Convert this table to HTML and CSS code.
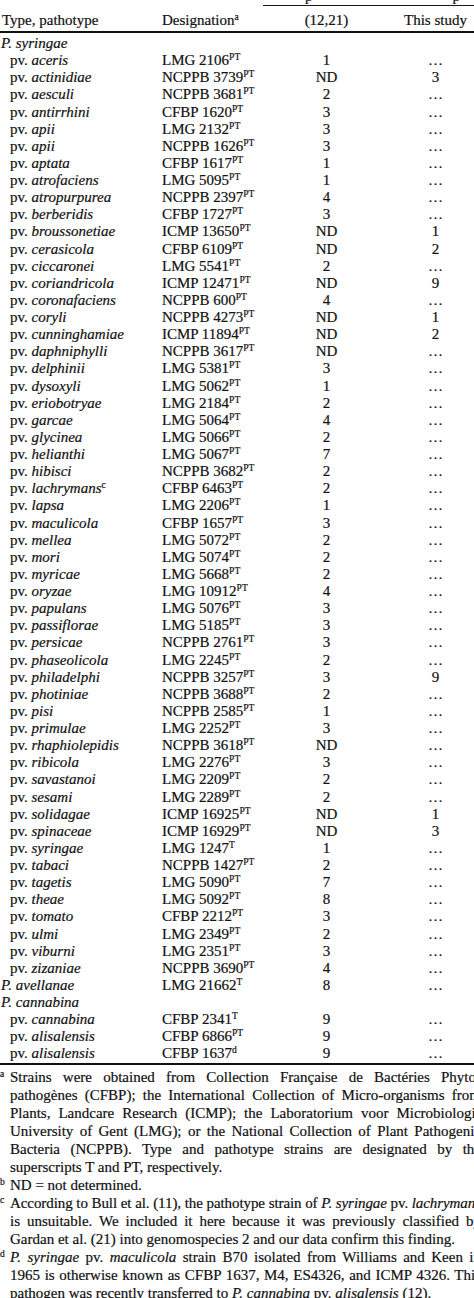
FILE: index.html
```html
<!DOCTYPE html>
<html>
<head>
<meta charset="utf-8">
<link rel="stylesheet" href="styles.css">
</head>
<body>
<div class="page">
  <div class="topcut"><div class="topcut-inner"><span class="gap1"></span>p<span class="gap2"></span>p</div></div>
  <div class="toprule"></div>
  <div class="row head">
    <div class="c1">Type, pathotype</div>
    <div class="c2">Designation<sup>a</sup></div>
    <div class="c3">(12,21)</div>
    <div class="c4">This study</div>
  </div>
  <div class="tbody">
    <div class="row"><div class="c1 sp"><i>P. syringae</i></div><div class="c2"></div><div class="c3"></div><div class="c4"></div></div>
    <div class="row"><div class="c1 pv">pv. <i>aceris</i></div><div class="c2">LMG 2106<sup>PT</sup></div><div class="c3">1</div><div class="c4">…</div></div>
    <div class="row"><div class="c1 pv">pv. <i>actinidiae</i></div><div class="c2">NCPPB 3739<sup>PT</sup></div><div class="c3">ND</div><div class="c4">3</div></div>
    <div class="row"><div class="c1 pv">pv. <i>aesculi</i></div><div class="c2">NCPPB 3681<sup>PT</sup></div><div class="c3">2</div><div class="c4">…</div></div>
    <div class="row"><div class="c1 pv">pv. <i>antirrhini</i></div><div class="c2">CFBP 1620<sup>PT</sup></div><div class="c3">3</div><div class="c4">…</div></div>
    <div class="row"><div class="c1 pv">pv. <i>apii</i></div><div class="c2">LMG 2132<sup>PT</sup></div><div class="c3">3</div><div class="c4">…</div></div>
    <div class="row"><div class="c1 pv">pv. <i>apii</i></div><div class="c2">NCPPB 1626<sup>PT</sup></div><div class="c3">3</div><div class="c4">…</div></div>
    <div class="row"><div class="c1 pv">pv. <i>aptata</i></div><div class="c2">CFBP 1617<sup>PT</sup></div><div class="c3">1</div><div class="c4">…</div></div>
    <div class="row"><div class="c1 pv">pv. <i>atrofaciens</i></div><div class="c2">LMG 5095<sup>PT</sup></div><div class="c3">1</div><div class="c4">…</div></div>
    <div class="row"><div class="c1 pv">pv. <i>atropurpurea</i></div><div class="c2">NCPPB 2397<sup>PT</sup></div><div class="c3">4</div><div class="c4">…</div></div>
    <div class="row"><div class="c1 pv">pv. <i>berberidis</i></div><div class="c2">CFBP 1727<sup>PT</sup></div><div class="c3">3</div><div class="c4">…</div></div>
    <div class="row"><div class="c1 pv">pv. <i>broussonetiae</i></div><div class="c2">ICMP 13650<sup>PT</sup></div><div class="c3">ND</div><div class="c4">1</div></div>
    <div class="row"><div class="c1 pv">pv. <i>cerasicola</i></div><div class="c2">CFBP 6109<sup>PT</sup></div><div class="c3">ND</div><div class="c4">2</div></div>
    <div class="row"><div class="c1 pv">pv. <i>ciccaronei</i></div><div class="c2">LMG 5541<sup>PT</sup></div><div class="c3">2</div><div class="c4">…</div></div>
    <div class="row"><div class="c1 pv">pv. <i>coriandricola</i></div><div class="c2">ICMP 12471<sup>PT</sup></div><div class="c3">ND</div><div class="c4">9</div></div>
    <div class="row"><div class="c1 pv">pv. <i>coronafaciens</i></div><div class="c2">NCPPB 600<sup>PT</sup></div><div class="c3">4</div><div class="c4">…</div></div>
    <div class="row"><div class="c1 pv">pv. <i>coryli</i></div><div class="c2">NCPPB 4273<sup>PT</sup></div><div class="c3">ND</div><div class="c4">1</div></div>
    <div class="row"><div class="c1 pv">pv. <i>cunninghamiae</i></div><div class="c2">ICMP 11894<sup>PT</sup></div><div class="c3">ND</div><div class="c4">2</div></div>
    <div class="row"><div class="c1 pv">pv. <i>daphniphylli</i></div><div class="c2">NCPPB 3617<sup>PT</sup></div><div class="c3">ND</div><div class="c4">…</div></div>
    <div class="row"><div class="c1 pv">pv. <i>delphinii</i></div><div class="c2">LMG 5381<sup>PT</sup></div><div class="c3">3</div><div class="c4">…</div></div>
    <div class="row"><div class="c1 pv">pv. <i>dysoxyli</i></div><div class="c2">LMG 5062<sup>PT</sup></div><div class="c3">1</div><div class="c4">…</div></div>
    <div class="row"><div class="c1 pv">pv. <i>eriobotryae</i></div><div class="c2">LMG 2184<sup>PT</sup></div><div class="c3">2</div><div class="c4">…</div></div>
    <div class="row"><div class="c1 pv">pv. <i>garcae</i></div><div class="c2">LMG 5064<sup>PT</sup></div><div class="c3">4</div><div class="c4">…</div></div>
    <div class="row"><div class="c1 pv">pv. <i>glycinea</i></div><div class="c2">LMG 5066<sup>PT</sup></div><div class="c3">2</div><div class="c4">…</div></div>
    <div class="row"><div class="c1 pv">pv. <i>helianthi</i></div><div class="c2">LMG 5067<sup>PT</sup></div><div class="c3">7</div><div class="c4">…</div></div>
    <div class="row"><div class="c1 pv">pv. <i>hibisci</i></div><div class="c2">NCPPB 3682<sup>PT</sup></div><div class="c3">2</div><div class="c4">…</div></div>
    <div class="row"><div class="c1 pv">pv. <i>lachrymans</i><sup>c</sup></div><div class="c2">CFBP 6463<sup>PT</sup></div><div class="c3">2</div><div class="c4">…</div></div>
    <div class="row"><div class="c1 pv">pv. <i>lapsa</i></div><div class="c2">LMG 2206<sup>PT</sup></div><div class="c3">1</div><div class="c4">…</div></div>
    <div class="row"><div class="c1 pv">pv. <i>maculicola</i></div><div class="c2">CFBP 1657<sup>PT</sup></div><div class="c3">3</div><div class="c4">…</div></div>
    <div class="row"><div class="c1 pv">pv. <i>mellea</i></div><div class="c2">LMG 5072<sup>PT</sup></div><div class="c3">2</div><div class="c4">…</div></div>
    <div class="row"><div class="c1 pv">pv. <i>mori</i></div><div class="c2">LMG 5074<sup>PT</sup></div><div class="c3">2</div><div class="c4">…</div></div>
    <div class="row"><div class="c1 pv">pv. <i>myricae</i></div><div class="c2">LMG 5668<sup>PT</sup></div><div class="c3">2</div><div class="c4">…</div></div>
    <div class="row"><div class="c1 pv">pv. <i>oryzae</i></div><div class="c2">LMG 10912<sup>PT</sup></div><div class="c3">4</div><div class="c4">…</div></div>
    <div class="row"><div class="c1 pv">pv. <i>papulans</i></div><div class="c2">LMG 5076<sup>PT</sup></div><div class="c3">3</div><div class="c4">…</div></div>
    <div class="row"><div class="c1 pv">pv. <i>passiflorae</i></div><div class="c2">LMG 5185<sup>PT</sup></div><div class="c3">3</div><div class="c4">…</div></div>
    <div class="row"><div class="c1 pv">pv. <i>persicae</i></div><div class="c2">NCPPB 2761<sup>PT</sup></div><div class="c3">3</div><div class="c4">…</div></div>
    <div class="row"><div class="c1 pv">pv. <i>phaseolicola</i></div><div class="c2">LMG 2245<sup>PT</sup></div><div class="c3">2</div><div class="c4">…</div></div>
    <div class="row"><div class="c1 pv">pv. <i>philadelphi</i></div><div class="c2">NCPPB 3257<sup>PT</sup></div><div class="c3">3</div><div class="c4">9</div></div>
    <div class="row"><div class="c1 pv">pv. <i>photiniae</i></div><div class="c2">NCPPB 3688<sup>PT</sup></div><div class="c3">2</div><div class="c4">…</div></div>
    <div class="row"><div class="c1 pv">pv. <i>pisi</i></div><div class="c2">NCPPB 2585<sup>PT</sup></div><div class="c3">1</div><div class="c4">…</div></div>
    <div class="row"><div class="c1 pv">pv. <i>primulae</i></div><div class="c2">LMG 2252<sup>PT</sup></div><div class="c3">3</div><div class="c4">…</div></div>
    <div class="row"><div class="c1 pv">pv. <i>rhaphiolepidis</i></div><div class="c2">NCPPB 3618<sup>PT</sup></div><div class="c3">ND</div><div class="c4">…</div></div>
    <div class="row"><div class="c1 pv">pv. <i>ribicola</i></div><div class="c2">LMG 2276<sup>PT</sup></div><div class="c3">3</div><div class="c4">…</div></div>
    <div class="row"><div class="c1 pv">pv. <i>savastanoi</i></div><div class="c2">LMG 2209<sup>PT</sup></div><div class="c3">2</div><div class="c4">…</div></div>
    <div class="row"><div class="c1 pv">pv. <i>sesami</i></div><div class="c2">LMG 2289<sup>PT</sup></div><div class="c3">2</div><div class="c4">…</div></div>
    <div class="row"><div class="c1 pv">pv. <i>solidagae</i></div><div class="c2">ICMP 16925<sup>PT</sup></div><div class="c3">ND</div><div class="c4">1</div></div>
    <div class="row"><div class="c1 pv">pv. <i>spinaceae</i></div><div class="c2">ICMP 16929<sup>PT</sup></div><div class="c3">ND</div><div class="c4">3</div></div>
    <div class="row"><div class="c1 pv">pv. <i>syringae</i></div><div class="c2">LMG 1247<sup>T</sup></div><div class="c3">1</div><div class="c4">…</div></div>
    <div class="row"><div class="c1 pv">pv. <i>tabaci</i></div><div class="c2">NCPPB 1427<sup>PT</sup></div><div class="c3">2</div><div class="c4">…</div></div>
    <div class="row"><div class="c1 pv">pv. <i>tagetis</i></div><div class="c2">LMG 5090<sup>PT</sup></div><div class="c3">7</div><div class="c4">…</div></div>
    <div class="row"><div class="c1 pv">pv. <i>theae</i></div><div class="c2">LMG 5092<sup>PT</sup></div><div class="c3">8</div><div class="c4">…</div></div>
    <div class="row"><div class="c1 pv">pv. <i>tomato</i></div><div class="c2">CFBP 2212<sup>PT</sup></div><div class="c3">3</div><div class="c4">…</div></div>
    <div class="row"><div class="c1 pv">pv. <i>ulmi</i></div><div class="c2">LMG 2349<sup>PT</sup></div><div class="c3">2</div><div class="c4">…</div></div>
    <div class="row"><div class="c1 pv">pv. <i>viburni</i></div><div class="c2">LMG 2351<sup>PT</sup></div><div class="c3">3</div><div class="c4">…</div></div>
    <div class="row"><div class="c1 pv">pv. <i>zizaniae</i></div><div class="c2">NCPPB 3690<sup>PT</sup></div><div class="c3">4</div><div class="c4">…</div></div>
    <div class="row"><div class="c1 sp"><i>P. avellanae</i></div><div class="c2">LMG 21662<sup>T</sup></div><div class="c3">8</div><div class="c4">…</div></div>
    <div class="row"><div class="c1 sp"><i>P. cannabina</i></div><div class="c2"></div><div class="c3"></div><div class="c4"></div></div>
    <div class="row"><div class="c1 pv">pv. <i>cannabina</i></div><div class="c2">CFBP 2341<sup>T</sup></div><div class="c3">9</div><div class="c4">…</div></div>
    <div class="row"><div class="c1 pv">pv. <i>alisalensis</i></div><div class="c2">CFBP 6866<sup>PT</sup></div><div class="c3">9</div><div class="c4">…</div></div>
    <div class="row"><div class="c1 pv">pv. <i>alisalensis</i></div><div class="c2">CFBP 1637<sup>d</sup></div><div class="c3">9</div><div class="c4">…</div></div>
  </div>
  <div class="notes">
    <div class="note">
      <div class="mark"><sup>a</sup></div>
      <div class="ntext">
        <div class="j">Strains were obtained from Collection Française de Bactéries Phyto-</div>
        <div class="j">pathogènes (CFBP); the International Collection of Micro-organisms from</div>
        <div class="j wide">Plants, Landcare Research (ICMP); the Laboratorium voor Microbiologie,</div>
        <div class="j">University of Gent (LMG); or the National Collection of Plant Pathogenic</div>
        <div class="j">Bacteria (NCPPB). Type and pathotype strains are designated by the</div>
        <div class="l">superscripts T and PT, respectively.</div>
      </div>
    </div>
    <div class="note">
      <div class="mark"><sup>b</sup></div>
      <div class="ntext"><div class="l">ND = not determined.</div></div>
    </div>
    <div class="note">
      <div class="mark"><sup>c</sup></div>
      <div class="ntext">
        <div class="j tight">According to Bull et al. (11), the pathotype strain of <i>P. syringae</i> pv. <i>lachrymans</i></div>
        <div class="j">is unsuitable. We included it here because it was previously classified by</div>
        <div class="l">Gardan et al. (21) into genomospecies 2 and our data confirm this finding.</div>
      </div>
    </div>
    <div class="note">
      <div class="mark"><sup>d</sup></div>
      <div class="ntext">
        <div class="j"><i>P. syringae</i> pv. <i>maculicola</i> strain B70 isolated from Williams and Keen in</div>
        <div class="j">1965 is otherwise known as CFBP 1637, M4, ES4326, and ICMP 4326. This</div>
        <div class="l">pathogen was recently transferred to <i>P. cannabina</i> pv. <i>alisalensis</i> (12).</div>
      </div>
    </div>
  </div>
</div>
</body>
</html>
```

FILE: styles.css
```css
html, body {
  margin: 0;
  padding: 0;
  background: #ffffff;
  overflow: hidden;
}
body {
  font-family: "Liberation Serif", "Times New Roman", serif;
  font-size: 15px;
  color: #111111;
  -webkit-text-stroke: 0.2px #111111;
}
.page {
  width: 482px;
  overflow: hidden;
}
.topcut {
  height: 5px;
  overflow: hidden;
}
.topcut-inner {
  margin-top: -12px;
  line-height: 16px;
  white-space: nowrap;
}
.gap1 { display: inline-block; width: 305px; }
.gap2 { display: inline-block; width: 140px; }
.toprule {
  margin-left: 263px;
  border-top: 1px solid #1a1a1a;
}
.row {
  display: grid;
  grid-template-columns: 162px 100px 129px 89px;
  line-height: 17.14px;
  height: 17.14px;
  white-space: nowrap;
}
.head {
  padding-top: 6.4px;
  padding-bottom: 1.5px;
  border-bottom: 2px solid #111111;
}
.c1 { padding-left: 2px; }
.c1.pv { padding-left: 10px; }
.c1.sp { padding-left: 1px; }
.c3, .c4 { text-align: center; }
.tbody {
  padding-top: 2px;
  border-bottom: 2px solid #111111;
}
sup {
  font-size: 9.5px;
  line-height: 0;
  vertical-align: 5px;
}
.notes {
  padding-top: 3.6px;
}
.note {
  display: flex;
  line-height: 18px;
}
.mark {
  width: 10px;
  flex: none;
}
.mark sup {
  font-size: 9.5px;
  vertical-align: 5px;
}
.ntext {
  width: 471px;
  flex: none;
}
.j {
  text-align: justify;
  text-align-last: justify;
  white-space: nowrap;
}
.j.wide {
  width: 476px;
}
.j.tight {
  letter-spacing: -0.08px;
}
.l {
  text-align: left;
  white-space: nowrap;
}
```
